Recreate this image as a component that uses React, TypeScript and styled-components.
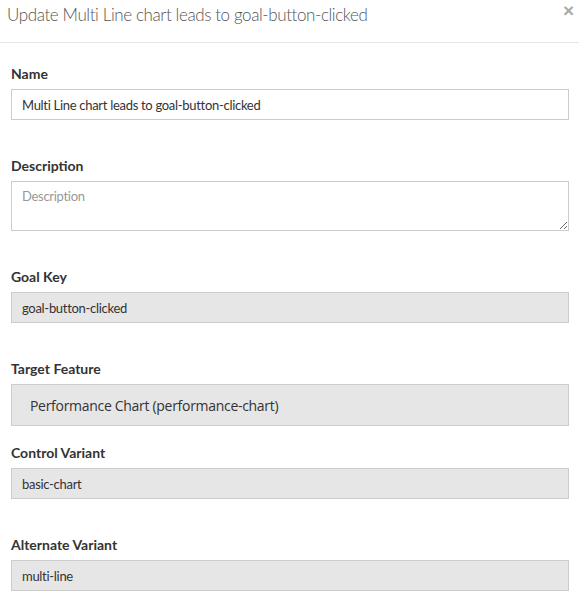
import React from "react";
import styled, { createGlobalStyle } from "styled-components";

const GlobalStyle = createGlobalStyle`
  html, body {
    margin: 0;
    padding: 0;
    background: #fff;
  }
  body {
    font-family: Lato, "Noto Sans", sans-serif;
    color: #333;
  }
`;

interface IField {
  label: string;
  value: string;
}

const fields: IField[] = [
  { label: "Goal Key", value: "goal-button-clicked" },
];

const variants: IField[] = [
  { label: "Control Variant", value: "basic-chart" },
  { label: "Alternate Variant", value: "multi-line" },
];

export default function App() {
  return (
    <>
      <GlobalStyle />
      <Modal>
        <ModalHeader>
          <ModalTitle>Update Multi Line chart leads to goal-button-clicked</ModalTitle>
          <CloseButton type="button">×</CloseButton>
        </ModalHeader>
        <ModalBody>
          <FormGroup>
            <Label>Name</Label>
            <TextInput defaultValue="Multi Line chart leads to goal-button-clicked" />
          </FormGroup>
          <FormGroup>
            <Label>Description</Label>
            <TextArea placeholder="Description" />
          </FormGroup>
          {fields.map((field) => (
            <FormGroup key={field.label}>
              <Label>{field.label}</Label>
              <TextInput value={field.value} disabled readOnly />
            </FormGroup>
          ))}
          <FormGroup $tight>
            <Label>Target Feature</Label>
            <SelectBox>Performance Chart (performance-chart)</SelectBox>
          </FormGroup>
          {variants.map((field) => (
            <FormGroup key={field.label}>
              <Label>{field.label}</Label>
              <TextInput value={field.value} disabled readOnly />
            </FormGroup>
          ))}
        </ModalBody>
      </Modal>
    </>
  );
}

const Modal = styled.div`
  width: 579px;
  background: #fff;
`;

const ModalHeader = styled.div`
  height: 43px;
  display: flex;
  align-items: flex-start;
  justify-content: space-between;
  border-bottom: 1px solid #e5e5e5;
  padding: 0 5px 0 7px;
  box-sizing: border-box;
`;

const ModalTitle = styled.h4`
  margin: 3px 0 0;
  font-size: 17px;
  font-weight: 300;
  letter-spacing: -0.4px;
  line-height: 24px;
  color: #555;
`;

const CloseButton = styled.button`
  margin-top: 1px;
  padding: 0;
  border: 0;
  background: transparent;
  font-family: "Liberation Sans", sans-serif;
  font-size: 19px;
  font-weight: bold;
  line-height: 20px;
  color: #aaa;
  cursor: pointer;
`;

const ModalBody = styled.div`
  padding: 21px 10px 0 11px;
`;

const FormGroup = styled.div<{ $tight?: boolean }>`
  display: flex;
  flex-direction: column;
  gap: 5px;
  margin-bottom: ${(p) => (p.$tight ? "17px" : "36px")};
`;

const Label = styled.label`
  font-size: 14px;
  font-weight: bold;
  line-height: 20px;
  color: #333;
`;

const TextInput = styled.input`
  height: 31px;
  box-sizing: border-box;
  width: 100%;
  padding: 0 10px;
  border: 1px solid #ccc;
  background: #fff;
  font-family: Lato, "Noto Sans", sans-serif;
  font-size: 13px;
  letter-spacing: -0.3px;
  color: #333;
  outline: none;

  &:disabled {
    background: #e6e6e6;
    color: #333;
    -webkit-text-fill-color: #333;
    opacity: 1;
  }
`;

const TextArea = styled.textarea`
  height: 50px;
  box-sizing: border-box;
  width: 100%;
  padding: 6px 10px;
  border: 1px solid #ccc;
  font-family: Lato, "Noto Sans", sans-serif;
  font-size: 13px;
  letter-spacing: -0.3px;
  color: #333;
  outline: none;
  resize: vertical;

  &::placeholder {
    color: #999;
  }
`;

const SelectBox = styled.div`
  height: 42px;
  box-sizing: border-box;
  display: flex;
  align-items: center;
  padding: 0 18px;
  border: 1px solid #ccc;
  background: #e6e6e6;
  font-family: "Open Sans", sans-serif;
  font-size: 14px;
  letter-spacing: -0.3px;
  color: #333;
`;
